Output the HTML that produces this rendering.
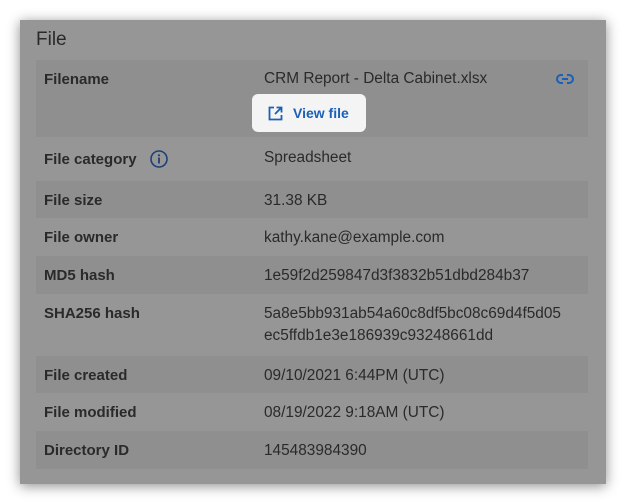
<!DOCTYPE html>
<html><head><style>
body{margin:0;width:623px;height:504px;background:#fff;font-family:"Liberation Sans",sans-serif;position:relative;overflow:hidden}
.card{position:absolute;left:20px;top:20px;width:586px;height:464px;background:#969696;box-shadow:0 2px 12px rgba(0,0,0,.45)}
h1{position:absolute;left:16px;top:9px;margin:0;font-size:19px;font-weight:normal;color:#2a2a2a}
.row{position:absolute;left:16px;width:552px;font-size:15px;color:#2a2a2a}
.row.s{background:#8f8f8f}
.l{position:absolute;left:8px;font-weight:bold}
.v{position:absolute;left:228px;line-height:22px;font-size:15.4px}
.btn{position:absolute;left:232px;top:74px;width:114px;height:38px;background:#f4f4f4;border-radius:6px;color:#1a5fb8;font-weight:bold;font-size:14px}
</style></head><body>
<div class="card">
<h1>File</h1>
<div class="row s" style="top:40px;height:77px"><span class="l" style="top:11px">Filename</span><span class="v" style="top:8px">CRM Report - Delta Cabinet.xlsx</span>
<svg style="position:absolute;left:520px;top:13px" width="18" height="12" viewBox="0 0 18 12"><path d="M7 2H5a4 4 0 000 8h2M11 2h2a4 4 0 010 8h-2M6 6h6" fill="none" stroke="#1a5fb8" stroke-width="2"/></svg></div>
<div class="btn"><svg style="position:absolute;left:16px;top:12px" width="15" height="15" viewBox="0 0 15 15"><path d="M6 1.5H1.5v12h12V9M8.5 1.5h5v5M13.5 1.5L7 8" fill="none" stroke="#1a5fb8" stroke-width="1.8"/></svg><span style="position:absolute;left:41px;top:11px">View file</span></div>
<div class="row" style="top:117px;height:42px"><span class="l" style="top:14px">File category</span>
<svg style="position:absolute;left:114px;top:13px" width="18" height="18" viewBox="0 0 18 18"><circle cx="9" cy="9" r="8" fill="none" stroke="#1d3f7a" stroke-width="1.6"/><circle cx="9" cy="5.3" r="1.1" fill="#1d3f7a"/><rect x="8.1" y="7.5" width="1.8" height="6" fill="#1d3f7a"/></svg>
<span class="v" style="top:10px">Spreadsheet</span></div>
<div class="row s" style="top:161px;height:37px"><span class="l" style="top:11px">File size</span><span class="v" style="top:9px">31.38 KB</span></div>
<div class="row" style="top:198px;height:38px"><span class="l" style="top:11px">File owner</span><span class="v" style="top:9px">kathy.kane@example.com</span></div>
<div class="row s" style="top:236px;height:38px"><span class="l" style="top:11px">MD5 hash</span><span class="v" style="top:9px">1e59f2d259847d3f3832b51dbd284b37</span></div>
<div class="row" style="top:274px;height:62px"><span class="l" style="top:11px">SHA256 hash</span><span class="v" style="top:9px">5a8e5bb931ab54a60c8df5bc08c69d4f5d05<br>ec5ffdb1e3e186939c93248661dd</span></div>
<div class="row s" style="top:336px;height:37px"><span class="l" style="top:11px">File created</span><span class="v" style="top:9px">09/10/2021 6:44PM (UTC)</span></div>
<div class="row" style="top:373px;height:38px"><span class="l" style="top:11px">File modified</span><span class="v" style="top:9px">08/19/2022 9:18AM (UTC)</span></div>
<div class="row s" style="top:411px;height:38px"><span class="l" style="top:11px">Directory ID</span><span class="v" style="top:9px">145483984390</span></div>
</div>
</body></html>
